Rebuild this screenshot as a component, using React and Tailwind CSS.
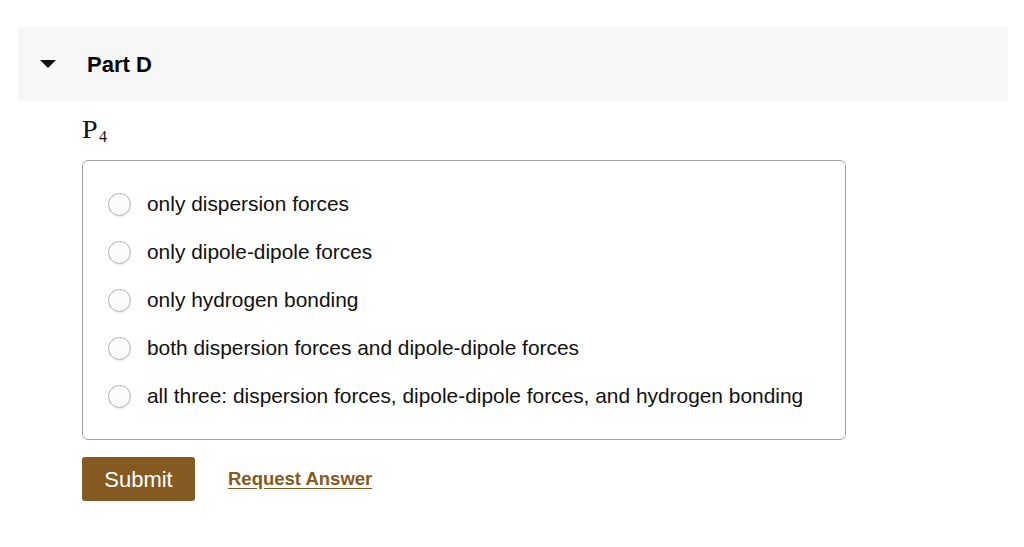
const options = [
	"only dispersion forces",
	"only dipole-dipole forces",
	"only hydrogen bonding",
	"both dispersion forces and dipole-dipole forces",
	"all three: dispersion forces, dipole-dipole forces, and hydrogen bonding",
];

const App = () => {
	return (
		<div className="min-h-[547px] bg-white pt-[27px] pl-[18px] pr-[16px] font-['Liberation_Sans',Arial,sans-serif] text-black">
			<div className="flex h-[74px] items-center bg-[#f7f7f7]">
				<svg width="16" height="9" viewBox="0 0 16 9" className="ml-[22px]">
					<polygon points="0,0 16,0 8,8" fill="#111" />
				</svg>
				<h2 className="ml-[31px] text-[22px] font-bold">Part D</h2>
			</div>
			<div className="pl-[64px]">
				<div className="mt-[12px] flex h-[47px] items-start font-['Liberation_Serif','Times_New_Roman',serif] leading-none text-[#111]">
					<span className="mt-[4px] inline-block origin-left scale-x-[1.12] text-[25px]">P</span>
					<span className="ml-[3px] mt-[16px] text-[16px]">4</span>
				</div>
				<div className="w-[764px] rounded-[6px] border-[1.5px] border-[#a3a3a3] py-[19px] pl-[25px]">
					{options.map((opt) => (
						<label key={opt} className="flex h-[48px] items-center">
							<span className="h-[23px] w-[23px] rounded-full border border-[#b0b0b0] bg-gradient-to-b from-white to-[#f7f7f7] shadow-[0_1px_1px_rgba(0,0,0,0.08)]" />
							<span className="ml-[16px] text-[20.9px] text-[#111]">{opt}</span>
						</label>
					))}
				</div>
				<div className="mt-[17px] flex items-center">
					<button className="h-[44px] w-[113px] rounded-[3px] bg-[#845a22] text-[22px] text-white">
						Submit
					</button>
					<a href="#" className="ml-[33px] text-[18.5px] font-bold text-[#845a22] underline underline-offset-[3px]">
						Request Answer
					</a>
				</div>
			</div>
		</div>
	);
};

export default App;
